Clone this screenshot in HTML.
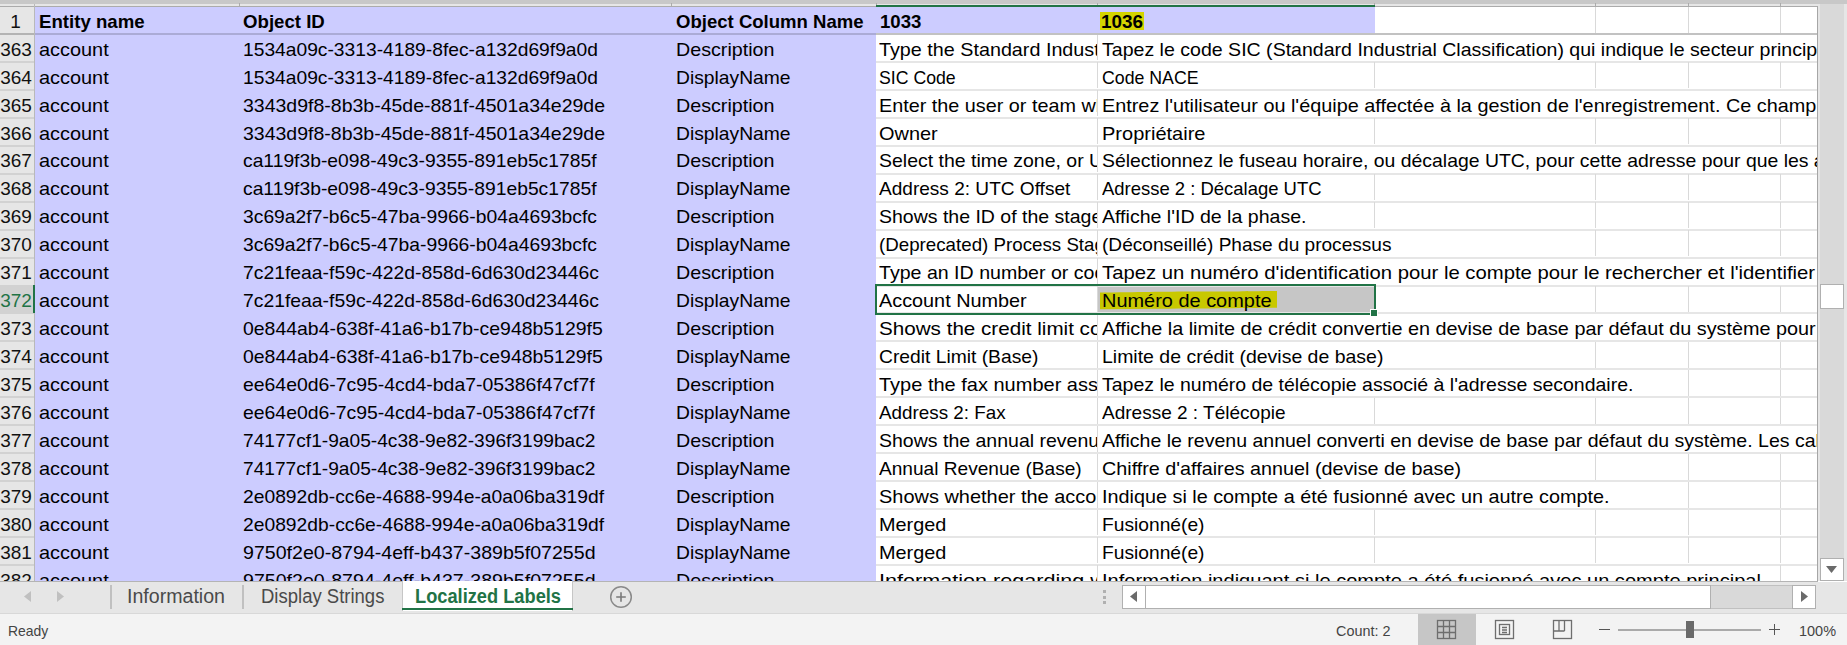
<!DOCTYPE html>
<html><head><meta charset="utf-8"><style>
html,body{margin:0;padding:0;}
body{width:1847px;height:645px;overflow:hidden;position:relative;background:#fff;font-family:"Liberation Sans",sans-serif;}
div{position:absolute;}
.t{white-space:nowrap;font-size:19px;line-height:19px;transform-origin:0 0;}
</style></head><body>
<div style="left:0px;top:0px;width:1847px;height:4px;background:#c8c8c8;"></div>
<div style="left:0px;top:4px;width:1818px;height:2px;background:#e6e6e6;"></div>
<div style="left:0px;top:6px;width:1818px;height:1px;background:#ababab;"></div>
<div style="left:239px;top:3px;width:1px;height:4px;background:#ababab;"></div>
<div style="left:671px;top:3px;width:1px;height:4px;background:#ababab;"></div>
<div style="left:876px;top:3px;width:1px;height:4px;background:#ababab;"></div>
<div style="left:1097px;top:3px;width:1px;height:4px;background:#ababab;"></div>
<div style="left:1374px;top:3px;width:1px;height:4px;background:#ababab;"></div>
<div style="left:1595px;top:3px;width:1px;height:4px;background:#ababab;"></div>
<div style="left:1688px;top:3px;width:1px;height:4px;background:#ababab;"></div>
<div style="left:1780px;top:3px;width:1px;height:4px;background:#ababab;"></div>
<div style="left:876px;top:5px;width:499px;height:2px;background:#217346;"></div>
<div style="left:0px;top:7px;width:34px;height:574px;background:#e6e6e6;"></div>
<div style="left:35px;top:7px;width:1340px;height:26px;background:#ccccff;"></div>
<div style="left:35px;top:33px;width:841px;height:548px;background:#ccccff;"></div>
<div style="left:0px;top:61px;width:34px;height:2px;background:#d2d2d2;"></div>
<div style="left:0px;top:89px;width:34px;height:2px;background:#d2d2d2;"></div>
<div style="left:0px;top:117px;width:34px;height:2px;background:#d2d2d2;"></div>
<div style="left:0px;top:145px;width:34px;height:2px;background:#d2d2d2;"></div>
<div style="left:0px;top:173px;width:34px;height:2px;background:#d2d2d2;"></div>
<div style="left:0px;top:201px;width:34px;height:2px;background:#d2d2d2;"></div>
<div style="left:0px;top:229px;width:34px;height:2px;background:#d2d2d2;"></div>
<div style="left:0px;top:257px;width:34px;height:2px;background:#d2d2d2;"></div>
<div style="left:0px;top:285px;width:34px;height:2px;background:#d2d2d2;"></div>
<div style="left:0px;top:312px;width:34px;height:2px;background:#d2d2d2;"></div>
<div style="left:0px;top:340px;width:34px;height:2px;background:#d2d2d2;"></div>
<div style="left:0px;top:368px;width:34px;height:2px;background:#d2d2d2;"></div>
<div style="left:0px;top:396px;width:34px;height:2px;background:#d2d2d2;"></div>
<div style="left:0px;top:424px;width:34px;height:2px;background:#d2d2d2;"></div>
<div style="left:0px;top:452px;width:34px;height:2px;background:#d2d2d2;"></div>
<div style="left:0px;top:480px;width:34px;height:2px;background:#d2d2d2;"></div>
<div style="left:0px;top:508px;width:34px;height:2px;background:#d2d2d2;"></div>
<div style="left:0px;top:536px;width:34px;height:2px;background:#d2d2d2;"></div>
<div style="left:0px;top:564px;width:34px;height:2px;background:#d2d2d2;"></div>
<div style="left:0px;top:285px;width:33px;height:28px;background:#d2d2d2;"></div>
<div style="left:33px;top:285px;width:2px;height:28px;background:#217346;"></div>
<div style="left:876px;top:61px;width:941px;height:2px;background:#e6e6e6;"></div>
<div style="left:876px;top:89px;width:941px;height:2px;background:#e6e6e6;"></div>
<div style="left:876px;top:117px;width:941px;height:2px;background:#e6e6e6;"></div>
<div style="left:876px;top:145px;width:941px;height:2px;background:#e6e6e6;"></div>
<div style="left:876px;top:173px;width:941px;height:2px;background:#e6e6e6;"></div>
<div style="left:876px;top:201px;width:941px;height:2px;background:#e6e6e6;"></div>
<div style="left:876px;top:229px;width:941px;height:2px;background:#e6e6e6;"></div>
<div style="left:876px;top:257px;width:941px;height:2px;background:#e6e6e6;"></div>
<div style="left:876px;top:285px;width:941px;height:2px;background:#e6e6e6;"></div>
<div style="left:876px;top:312px;width:941px;height:2px;background:#e6e6e6;"></div>
<div style="left:876px;top:340px;width:941px;height:2px;background:#e6e6e6;"></div>
<div style="left:876px;top:368px;width:941px;height:2px;background:#e6e6e6;"></div>
<div style="left:876px;top:396px;width:941px;height:2px;background:#e6e6e6;"></div>
<div style="left:876px;top:424px;width:941px;height:2px;background:#e6e6e6;"></div>
<div style="left:876px;top:452px;width:941px;height:2px;background:#e6e6e6;"></div>
<div style="left:876px;top:480px;width:941px;height:2px;background:#e6e6e6;"></div>
<div style="left:876px;top:508px;width:941px;height:2px;background:#e6e6e6;"></div>
<div style="left:876px;top:536px;width:941px;height:2px;background:#e6e6e6;"></div>
<div style="left:876px;top:564px;width:941px;height:2px;background:#e6e6e6;"></div>
<div style="left:1595px;top:7px;width:1px;height:26px;background:#d9d9d9;"></div>
<div style="left:1688px;top:7px;width:1px;height:26px;background:#d9d9d9;"></div>
<div style="left:1780px;top:7px;width:1px;height:26px;background:#d9d9d9;"></div>
<div style="left:1097px;top:35px;width:1px;height:25px;background:#d9d9d9;"></div>
<div style="left:1097px;top:62px;width:1px;height:26px;background:#d9d9d9;"></div>
<div style="left:1374px;top:62px;width:1px;height:26px;background:#d9d9d9;"></div>
<div style="left:1595px;top:62px;width:1px;height:26px;background:#d9d9d9;"></div>
<div style="left:1688px;top:62px;width:1px;height:26px;background:#d9d9d9;"></div>
<div style="left:1780px;top:62px;width:1px;height:26px;background:#d9d9d9;"></div>
<div style="left:1097px;top:90px;width:1px;height:26px;background:#d9d9d9;"></div>
<div style="left:1097px;top:118px;width:1px;height:26px;background:#d9d9d9;"></div>
<div style="left:1374px;top:118px;width:1px;height:26px;background:#d9d9d9;"></div>
<div style="left:1595px;top:118px;width:1px;height:26px;background:#d9d9d9;"></div>
<div style="left:1688px;top:118px;width:1px;height:26px;background:#d9d9d9;"></div>
<div style="left:1780px;top:118px;width:1px;height:26px;background:#d9d9d9;"></div>
<div style="left:1097px;top:146px;width:1px;height:26px;background:#d9d9d9;"></div>
<div style="left:1097px;top:174px;width:1px;height:26px;background:#d9d9d9;"></div>
<div style="left:1374px;top:174px;width:1px;height:26px;background:#d9d9d9;"></div>
<div style="left:1595px;top:174px;width:1px;height:26px;background:#d9d9d9;"></div>
<div style="left:1688px;top:174px;width:1px;height:26px;background:#d9d9d9;"></div>
<div style="left:1780px;top:174px;width:1px;height:26px;background:#d9d9d9;"></div>
<div style="left:1097px;top:202px;width:1px;height:26px;background:#d9d9d9;"></div>
<div style="left:1374px;top:202px;width:1px;height:26px;background:#d9d9d9;"></div>
<div style="left:1595px;top:202px;width:1px;height:26px;background:#d9d9d9;"></div>
<div style="left:1688px;top:202px;width:1px;height:26px;background:#d9d9d9;"></div>
<div style="left:1780px;top:202px;width:1px;height:26px;background:#d9d9d9;"></div>
<div style="left:1097px;top:230px;width:1px;height:26px;background:#d9d9d9;"></div>
<div style="left:1595px;top:230px;width:1px;height:26px;background:#d9d9d9;"></div>
<div style="left:1688px;top:230px;width:1px;height:26px;background:#d9d9d9;"></div>
<div style="left:1780px;top:230px;width:1px;height:26px;background:#d9d9d9;"></div>
<div style="left:1097px;top:258px;width:1px;height:26px;background:#d9d9d9;"></div>
<div style="left:1097px;top:286px;width:1px;height:26px;background:#d9d9d9;"></div>
<div style="left:1374px;top:286px;width:1px;height:26px;background:#d9d9d9;"></div>
<div style="left:1595px;top:286px;width:1px;height:26px;background:#d9d9d9;"></div>
<div style="left:1688px;top:286px;width:1px;height:26px;background:#d9d9d9;"></div>
<div style="left:1780px;top:286px;width:1px;height:26px;background:#d9d9d9;"></div>
<div style="left:1097px;top:314px;width:1px;height:26px;background:#d9d9d9;"></div>
<div style="left:1097px;top:342px;width:1px;height:26px;background:#d9d9d9;"></div>
<div style="left:1595px;top:342px;width:1px;height:26px;background:#d9d9d9;"></div>
<div style="left:1688px;top:342px;width:1px;height:26px;background:#d9d9d9;"></div>
<div style="left:1780px;top:342px;width:1px;height:26px;background:#d9d9d9;"></div>
<div style="left:1097px;top:370px;width:1px;height:26px;background:#d9d9d9;"></div>
<div style="left:1688px;top:370px;width:1px;height:26px;background:#d9d9d9;"></div>
<div style="left:1780px;top:370px;width:1px;height:26px;background:#d9d9d9;"></div>
<div style="left:1097px;top:398px;width:1px;height:26px;background:#d9d9d9;"></div>
<div style="left:1374px;top:398px;width:1px;height:26px;background:#d9d9d9;"></div>
<div style="left:1595px;top:398px;width:1px;height:26px;background:#d9d9d9;"></div>
<div style="left:1688px;top:398px;width:1px;height:26px;background:#d9d9d9;"></div>
<div style="left:1780px;top:398px;width:1px;height:26px;background:#d9d9d9;"></div>
<div style="left:1097px;top:426px;width:1px;height:26px;background:#d9d9d9;"></div>
<div style="left:1097px;top:454px;width:1px;height:26px;background:#d9d9d9;"></div>
<div style="left:1595px;top:454px;width:1px;height:26px;background:#d9d9d9;"></div>
<div style="left:1688px;top:454px;width:1px;height:26px;background:#d9d9d9;"></div>
<div style="left:1780px;top:454px;width:1px;height:26px;background:#d9d9d9;"></div>
<div style="left:1097px;top:482px;width:1px;height:26px;background:#d9d9d9;"></div>
<div style="left:1688px;top:482px;width:1px;height:26px;background:#d9d9d9;"></div>
<div style="left:1780px;top:482px;width:1px;height:26px;background:#d9d9d9;"></div>
<div style="left:1097px;top:510px;width:1px;height:25px;background:#d9d9d9;"></div>
<div style="left:1374px;top:510px;width:1px;height:25px;background:#d9d9d9;"></div>
<div style="left:1595px;top:510px;width:1px;height:25px;background:#d9d9d9;"></div>
<div style="left:1688px;top:510px;width:1px;height:25px;background:#d9d9d9;"></div>
<div style="left:1780px;top:510px;width:1px;height:25px;background:#d9d9d9;"></div>
<div style="left:1097px;top:537px;width:1px;height:26px;background:#d9d9d9;"></div>
<div style="left:1374px;top:537px;width:1px;height:26px;background:#d9d9d9;"></div>
<div style="left:1595px;top:537px;width:1px;height:26px;background:#d9d9d9;"></div>
<div style="left:1688px;top:537px;width:1px;height:26px;background:#d9d9d9;"></div>
<div style="left:1780px;top:537px;width:1px;height:26px;background:#d9d9d9;"></div>
<div style="left:1097px;top:565px;width:1px;height:16px;background:#d9d9d9;"></div>
<div style="left:1780px;top:565px;width:1px;height:16px;background:#d9d9d9;"></div>
<div style="left:1098px;top:287px;width:276px;height:25px;background:#c6c6c6;"></div>
<svg style="position:absolute;left:1099px;top:289px" width="180" height="22"><path d="M1 3.6 C40 3.4 60 2.6 100 2.6 S160 2 178 2 L178 18.8 C150 19 120 19.6 60 19.8 L1 20.3 Z" fill="#c8c800"/></svg>
<div style="left:1100px;top:12px;width:44px;height:18px;background:#d4d400;"></div>
<div style="left:0px;top:33px;width:35px;height:2px;background:rgba(0,0,0,0.22);"></div>
<div style="left:35px;top:33px;width:841px;height:2px;background:rgba(0,0,0,0.16);"></div>
<div style="left:876px;top:33px;width:941px;height:2px;background:rgba(0,0,0,0.24);"></div>
<div style="left:34px;top:4px;width:1px;height:577px;background:#b9b9b9;"></div>
<div style="left:33px;top:285px;width:2px;height:28px;background:#217346;"></div>
<div class="t" style="left:38.8px;top:12px;transform:scaleX(0.9815);font-weight:bold;color:#000;">Entity name</div>
<div class="t" style="left:243px;top:12px;transform:scaleX(0.9808);font-weight:bold;color:#000;">Object ID</div>
<div class="t" style="left:675.7px;top:12px;transform:scaleX(0.9764);font-weight:bold;color:#000;">Object Column Name</div>
<div class="t" style="left:880.4px;top:12px;transform:scaleX(0.9795);font-weight:bold;color:#000;">1033</div>
<div class="t" style="left:1101px;top:12px;transform:scaleX(0.9937);font-weight:bold;color:#000;">1036</div>
<div class="t" style="left:10.216796875px;top:12px;transform:scaleX(1.0000);color:#111;">1</div>
<div class="t" style="left:0.150390625px;top:40px;transform:scaleX(1.0000);color:#111;">363</div>
<div class="t" style="left:38.5px;top:40px;transform:scaleX(1.0474);color:#000;">account</div>
<div class="t" style="left:243px;top:40px;transform:scaleX(1.0119);color:#000;">1534a09c-3313-4189-8fec-a132d69f9a0d</div>
<div class="t" style="left:675.5px;top:40px;transform:scaleX(1.0365);color:#000;">Description</div>
<div style="left:876px;top:36px;width:221px;height:26px;overflow:hidden">
<div class="t" style="left:3.3px;top:4px;transform:scaleX(1.0395);color:#000;">Type the Standard Industrial Classification (SIC) code that indicates the account&#x27;s primary industry of business.</div>
</div>
<div style="left:1098px;top:36px;width:719px;height:26px;overflow:hidden">
<div class="t" style="left:3.5px;top:4px;transform:scaleX(1.0291);color:#000;">Tapez le code SIC (Standard Industrial Classification) qui indique le secteur principal d&#x27;activité du compte.</div>
</div>
<div class="t" style="left:0.150390625px;top:68px;transform:scaleX(1.0000);color:#111;">364</div>
<div class="t" style="left:38.5px;top:68px;transform:scaleX(1.0474);color:#000;">account</div>
<div class="t" style="left:243px;top:68px;transform:scaleX(1.0119);color:#000;">1534a09c-3313-4189-8fec-a132d69f9a0d</div>
<div class="t" style="left:675.5px;top:68px;transform:scaleX(1.0135);color:#000;">DisplayName</div>
<div style="left:876px;top:64px;width:221px;height:26px;overflow:hidden">
<div class="t" style="left:3.3px;top:4px;transform:scaleX(0.9311);color:#000;">SIC Code</div>
</div>
<div style="left:1098px;top:64px;width:719px;height:26px;overflow:hidden">
<div class="t" style="left:3.5px;top:4px;transform:scaleX(0.9325);color:#000;">Code NACE</div>
</div>
<div class="t" style="left:0.150390625px;top:96px;transform:scaleX(1.0000);color:#111;">365</div>
<div class="t" style="left:38.5px;top:96px;transform:scaleX(1.0474);color:#000;">account</div>
<div class="t" style="left:243px;top:96px;transform:scaleX(1.0259);color:#000;">3343d9f8-8b3b-45de-881f-4501a34e29de</div>
<div class="t" style="left:675.5px;top:96px;transform:scaleX(1.0365);color:#000;">Description</div>
<div style="left:876px;top:92px;width:221px;height:26px;overflow:hidden">
<div class="t" style="left:3.3px;top:4px;transform:scaleX(1.0416);color:#000;">Enter the user or team who is assigned to manage the record.</div>
</div>
<div style="left:1098px;top:92px;width:719px;height:26px;overflow:hidden">
<div class="t" style="left:3.5px;top:4px;transform:scaleX(1.0437);color:#000;">Entrez l&#x27;utilisateur ou l&#x27;équipe affectée à la gestion de l&#x27;enregistrement. Ce champ est mis à jour</div>
</div>
<div class="t" style="left:0.150390625px;top:124px;transform:scaleX(1.0000);color:#111;">366</div>
<div class="t" style="left:38.5px;top:124px;transform:scaleX(1.0474);color:#000;">account</div>
<div class="t" style="left:243px;top:124px;transform:scaleX(1.0259);color:#000;">3343d9f8-8b3b-45de-881f-4501a34e29de</div>
<div class="t" style="left:675.5px;top:124px;transform:scaleX(1.0135);color:#000;">DisplayName</div>
<div style="left:876px;top:120px;width:221px;height:26px;overflow:hidden">
<div class="t" style="left:3.3px;top:4px;transform:scaleX(1.0489);color:#000;">Owner</div>
</div>
<div style="left:1098px;top:120px;width:719px;height:26px;overflow:hidden">
<div class="t" style="left:3.5px;top:4px;transform:scaleX(1.0539);color:#000;">Propriétaire</div>
</div>
<div class="t" style="left:0.150390625px;top:151px;transform:scaleX(1.0000);color:#111;">367</div>
<div class="t" style="left:38.5px;top:151px;transform:scaleX(1.0474);color:#000;">account</div>
<div class="t" style="left:243px;top:151px;transform:scaleX(1.0151);color:#000;">ca119f3b-e098-49c3-9355-891eb5c1785f</div>
<div class="t" style="left:675.5px;top:151px;transform:scaleX(1.0365);color:#000;">Description</div>
<div style="left:876px;top:147px;width:221px;height:26px;overflow:hidden">
<div class="t" style="left:3.3px;top:4px;transform:scaleX(1.0255);color:#000;">Select the time zone, or UTC offset, for this address</div>
</div>
<div style="left:1098px;top:147px;width:719px;height:26px;overflow:hidden">
<div class="t" style="left:3.5px;top:4px;transform:scaleX(1.0212);color:#000;">Sélectionnez le fuseau horaire, ou décalage UTC, pour cette adresse pour que les autres</div>
</div>
<div class="t" style="left:0.150390625px;top:179px;transform:scaleX(1.0000);color:#111;">368</div>
<div class="t" style="left:38.5px;top:179px;transform:scaleX(1.0474);color:#000;">account</div>
<div class="t" style="left:243px;top:179px;transform:scaleX(1.0151);color:#000;">ca119f3b-e098-49c3-9355-891eb5c1785f</div>
<div class="t" style="left:675.5px;top:179px;transform:scaleX(1.0135);color:#000;">DisplayName</div>
<div style="left:876px;top:175px;width:221px;height:26px;overflow:hidden">
<div class="t" style="left:3.3px;top:4px;transform:scaleX(1.0028);color:#000;">Address 2: UTC Offset</div>
</div>
<div style="left:1098px;top:175px;width:719px;height:26px;overflow:hidden">
<div class="t" style="left:3.5px;top:4px;transform:scaleX(0.9713);color:#000;">Adresse 2 : Décalage UTC</div>
</div>
<div class="t" style="left:0.150390625px;top:207px;transform:scaleX(1.0000);color:#111;">369</div>
<div class="t" style="left:38.5px;top:207px;transform:scaleX(1.0474);color:#000;">account</div>
<div class="t" style="left:243px;top:207px;transform:scaleX(1.0155);color:#000;">3c69a2f7-b6c5-47ba-9966-b04a4693bcfc</div>
<div class="t" style="left:675.5px;top:207px;transform:scaleX(1.0365);color:#000;">Description</div>
<div style="left:876px;top:203px;width:221px;height:26px;overflow:hidden">
<div class="t" style="left:3.3px;top:4px;transform:scaleX(1.0261);color:#000;">Shows the ID of the stage.</div>
</div>
<div style="left:1098px;top:203px;width:719px;height:26px;overflow:hidden">
<div class="t" style="left:3.5px;top:4px;transform:scaleX(1.0293);color:#000;">Affiche l&#x27;ID de la phase.</div>
</div>
<div class="t" style="left:0.150390625px;top:235px;transform:scaleX(1.0000);color:#111;">370</div>
<div class="t" style="left:38.5px;top:235px;transform:scaleX(1.0474);color:#000;">account</div>
<div class="t" style="left:243px;top:235px;transform:scaleX(1.0155);color:#000;">3c69a2f7-b6c5-47ba-9966-b04a4693bcfc</div>
<div class="t" style="left:675.5px;top:235px;transform:scaleX(1.0135);color:#000;">DisplayName</div>
<div style="left:876px;top:231px;width:221px;height:26px;overflow:hidden">
<div class="t" style="left:3.3px;top:4px;transform:scaleX(0.9858);color:#000;">(Deprecated) Process Stage</div>
</div>
<div style="left:1098px;top:231px;width:719px;height:26px;overflow:hidden">
<div class="t" style="left:3.5px;top:4px;transform:scaleX(1.0041);color:#000;">(Déconseillé) Phase du processus</div>
</div>
<div class="t" style="left:0.150390625px;top:263px;transform:scaleX(1.0000);color:#111;">371</div>
<div class="t" style="left:38.5px;top:263px;transform:scaleX(1.0474);color:#000;">account</div>
<div class="t" style="left:243px;top:263px;transform:scaleX(1.0181);color:#000;">7c21feaa-f59c-422d-858d-6d630d23446c</div>
<div class="t" style="left:675.5px;top:263px;transform:scaleX(1.0365);color:#000;">Description</div>
<div style="left:876px;top:259px;width:221px;height:26px;overflow:hidden">
<div class="t" style="left:3.3px;top:4px;transform:scaleX(1.0306);color:#000;">Type an ID number or code for the account</div>
</div>
<div style="left:1098px;top:259px;width:719px;height:26px;overflow:hidden">
<div class="t" style="left:3.5px;top:4px;transform:scaleX(1.0669);color:#000;">Tapez un numéro d&#x27;identification pour le compte pour le rechercher et l&#x27;identifier rapidement</div>
</div>
<div class="t" style="left:0.150390625px;top:291px;transform:scaleX(1.0000);color:#217346;">372</div>
<div class="t" style="left:38.5px;top:291px;transform:scaleX(1.0474);color:#000;">account</div>
<div class="t" style="left:243px;top:291px;transform:scaleX(1.0181);color:#000;">7c21feaa-f59c-422d-858d-6d630d23446c</div>
<div class="t" style="left:675.5px;top:291px;transform:scaleX(1.0135);color:#000;">DisplayName</div>
<div style="left:876px;top:287px;width:221px;height:26px;overflow:hidden">
<div class="t" style="left:3.3px;top:4px;transform:scaleX(1.0438);color:#000;">Account Number</div>
</div>
<div style="left:1098px;top:287px;width:719px;height:26px;overflow:hidden">
<div class="t" style="left:3.5px;top:4px;transform:scaleX(1.0491);color:#000;">Numéro de compte</div>
</div>
<div class="t" style="left:0.150390625px;top:319px;transform:scaleX(1.0000);color:#111;">373</div>
<div class="t" style="left:38.5px;top:319px;transform:scaleX(1.0474);color:#000;">account</div>
<div class="t" style="left:243px;top:319px;transform:scaleX(1.0225);color:#000;">0e844ab4-638f-41a6-b17b-ce948b5129f5</div>
<div class="t" style="left:675.5px;top:319px;transform:scaleX(1.0365);color:#000;">Description</div>
<div style="left:876px;top:315px;width:221px;height:26px;overflow:hidden">
<div class="t" style="left:3.3px;top:4px;transform:scaleX(1.0857);color:#000;">Shows the credit limit converted to the system</div>
</div>
<div style="left:1098px;top:315px;width:719px;height:26px;overflow:hidden">
<div class="t" style="left:3.5px;top:4px;transform:scaleX(1.0434);color:#000;">Affiche la limite de crédit convertie en devise de base par défaut du système pour les rapports.</div>
</div>
<div class="t" style="left:0.150390625px;top:347px;transform:scaleX(1.0000);color:#111;">374</div>
<div class="t" style="left:38.5px;top:347px;transform:scaleX(1.0474);color:#000;">account</div>
<div class="t" style="left:243px;top:347px;transform:scaleX(1.0225);color:#000;">0e844ab4-638f-41a6-b17b-ce948b5129f5</div>
<div class="t" style="left:675.5px;top:347px;transform:scaleX(1.0135);color:#000;">DisplayName</div>
<div style="left:876px;top:343px;width:221px;height:26px;overflow:hidden">
<div class="t" style="left:3.3px;top:4px;transform:scaleX(1.0132);color:#000;">Credit Limit (Base)</div>
</div>
<div style="left:1098px;top:343px;width:719px;height:26px;overflow:hidden">
<div class="t" style="left:3.5px;top:4px;transform:scaleX(1.0248);color:#000;">Limite de crédit (devise de base)</div>
</div>
<div class="t" style="left:0.150390625px;top:375px;transform:scaleX(1.0000);color:#111;">375</div>
<div class="t" style="left:38.5px;top:375px;transform:scaleX(1.0474);color:#000;">account</div>
<div class="t" style="left:243px;top:375px;transform:scaleX(1.0210);color:#000;">ee64e0d6-7c95-4cd4-bda7-05386f47cf7f</div>
<div class="t" style="left:675.5px;top:375px;transform:scaleX(1.0365);color:#000;">Description</div>
<div style="left:876px;top:371px;width:221px;height:26px;overflow:hidden">
<div class="t" style="left:3.3px;top:4px;transform:scaleX(1.0525);color:#000;">Type the fax number associated with the secondary address.</div>
</div>
<div style="left:1098px;top:371px;width:719px;height:26px;overflow:hidden">
<div class="t" style="left:3.5px;top:4px;transform:scaleX(1.0259);color:#000;">Tapez le numéro de télécopie associé à l&#x27;adresse secondaire.</div>
</div>
<div class="t" style="left:0.150390625px;top:403px;transform:scaleX(1.0000);color:#111;">376</div>
<div class="t" style="left:38.5px;top:403px;transform:scaleX(1.0474);color:#000;">account</div>
<div class="t" style="left:243px;top:403px;transform:scaleX(1.0210);color:#000;">ee64e0d6-7c95-4cd4-bda7-05386f47cf7f</div>
<div class="t" style="left:675.5px;top:403px;transform:scaleX(1.0135);color:#000;">DisplayName</div>
<div style="left:876px;top:399px;width:221px;height:26px;overflow:hidden">
<div class="t" style="left:3.3px;top:4px;transform:scaleX(0.9916);color:#000;">Address 2: Fax</div>
</div>
<div style="left:1098px;top:399px;width:719px;height:26px;overflow:hidden">
<div class="t" style="left:3.5px;top:4px;transform:scaleX(1.0004);color:#000;">Adresse 2 : Télécopie</div>
</div>
<div class="t" style="left:0.150390625px;top:431px;transform:scaleX(1.0000);color:#111;">377</div>
<div class="t" style="left:38.5px;top:431px;transform:scaleX(1.0474);color:#000;">account</div>
<div class="t" style="left:243px;top:431px;transform:scaleX(1.0081);color:#000;">74177cf1-9a05-4c38-9e82-396f3199bac2</div>
<div class="t" style="left:675.5px;top:431px;transform:scaleX(1.0365);color:#000;">Description</div>
<div style="left:876px;top:427px;width:221px;height:26px;overflow:hidden">
<div class="t" style="left:3.3px;top:4px;transform:scaleX(1.0268);color:#000;">Shows the annual revenue converted to the system</div>
</div>
<div style="left:1098px;top:427px;width:719px;height:26px;overflow:hidden">
<div class="t" style="left:3.5px;top:4px;transform:scaleX(1.0272);color:#000;">Affiche le revenu annuel converti en devise de base par défaut du système. Les calculs utilisent</div>
</div>
<div class="t" style="left:0.150390625px;top:459px;transform:scaleX(1.0000);color:#111;">378</div>
<div class="t" style="left:38.5px;top:459px;transform:scaleX(1.0474);color:#000;">account</div>
<div class="t" style="left:243px;top:459px;transform:scaleX(1.0081);color:#000;">74177cf1-9a05-4c38-9e82-396f3199bac2</div>
<div class="t" style="left:675.5px;top:459px;transform:scaleX(1.0135);color:#000;">DisplayName</div>
<div style="left:876px;top:455px;width:221px;height:26px;overflow:hidden">
<div class="t" style="left:3.3px;top:4px;transform:scaleX(1.0048);color:#000;">Annual Revenue (Base)</div>
</div>
<div style="left:1098px;top:455px;width:719px;height:26px;overflow:hidden">
<div class="t" style="left:3.5px;top:4px;transform:scaleX(1.0402);color:#000;">Chiffre d&#x27;affaires annuel (devise de base)</div>
</div>
<div class="t" style="left:0.150390625px;top:487px;transform:scaleX(1.0000);color:#111;">379</div>
<div class="t" style="left:38.5px;top:487px;transform:scaleX(1.0474);color:#000;">account</div>
<div class="t" style="left:243px;top:487px;transform:scaleX(1.0140);color:#000;">2e0892db-cc6e-4688-994e-a0a06ba319df</div>
<div class="t" style="left:675.5px;top:487px;transform:scaleX(1.0365);color:#000;">Description</div>
<div style="left:876px;top:483px;width:221px;height:26px;overflow:hidden">
<div class="t" style="left:3.3px;top:4px;transform:scaleX(1.0502);color:#000;">Shows whether the account has been merged</div>
</div>
<div style="left:1098px;top:483px;width:719px;height:26px;overflow:hidden">
<div class="t" style="left:3.5px;top:4px;transform:scaleX(1.0423);color:#000;">Indique si le compte a été fusionné avec un autre compte.</div>
</div>
<div class="t" style="left:0.150390625px;top:515px;transform:scaleX(1.0000);color:#111;">380</div>
<div class="t" style="left:38.5px;top:515px;transform:scaleX(1.0474);color:#000;">account</div>
<div class="t" style="left:243px;top:515px;transform:scaleX(1.0140);color:#000;">2e0892db-cc6e-4688-994e-a0a06ba319df</div>
<div class="t" style="left:675.5px;top:515px;transform:scaleX(1.0135);color:#000;">DisplayName</div>
<div style="left:876px;top:511px;width:221px;height:26px;overflow:hidden">
<div class="t" style="left:3.3px;top:4px;transform:scaleX(1.0447);color:#000;">Merged</div>
</div>
<div style="left:1098px;top:511px;width:719px;height:26px;overflow:hidden">
<div class="t" style="left:3.5px;top:4px;transform:scaleX(1.0110);color:#000;">Fusionné(e)</div>
</div>
<div class="t" style="left:0.150390625px;top:543px;transform:scaleX(1.0000);color:#111;">381</div>
<div class="t" style="left:38.5px;top:543px;transform:scaleX(1.0474);color:#000;">account</div>
<div class="t" style="left:243px;top:543px;transform:scaleX(1.0309);color:#000;">9750f2e0-8794-4eff-b437-389b5f07255d</div>
<div class="t" style="left:675.5px;top:543px;transform:scaleX(1.0135);color:#000;">DisplayName</div>
<div style="left:876px;top:539px;width:221px;height:26px;overflow:hidden">
<div class="t" style="left:3.3px;top:4px;transform:scaleX(1.0447);color:#000;">Merged</div>
</div>
<div style="left:1098px;top:539px;width:719px;height:26px;overflow:hidden">
<div class="t" style="left:3.5px;top:4px;transform:scaleX(1.0110);color:#000;">Fusionné(e)</div>
</div>
<div class="t" style="left:0.150390625px;top:571px;transform:scaleX(1.0000);color:#111;">382</div>
<div class="t" style="left:38.5px;top:571px;transform:scaleX(1.0474);color:#000;">account</div>
<div class="t" style="left:243px;top:571px;transform:scaleX(1.0309);color:#000;">9750f2e0-8794-4eff-b437-389b5f07255d</div>
<div class="t" style="left:675.5px;top:571px;transform:scaleX(1.0365);color:#000;">Description</div>
<div style="left:876px;top:567px;width:221px;height:26px;overflow:hidden">
<div class="t" style="left:3.3px;top:4px;transform:scaleX(1.1368);color:#000;">Information regarding whether the account was merged</div>
</div>
<div style="left:1098px;top:567px;width:719px;height:26px;overflow:hidden">
<div class="t" style="left:3.5px;top:4px;transform:scaleX(1.0556);color:#000;">Information indiquant si le compte a été fusionné avec un compte principal.</div>
</div>
<div style="left:875px;top:284px;width:501px;height:2px;background:#217346;"></div>
<div style="left:875px;top:313px;width:501px;height:2px;background:#217346;"></div>
<div style="left:875px;top:284px;width:2px;height:31px;background:#217346;"></div>
<div style="left:1374px;top:284px;width:2px;height:26px;background:#217346;"></div>
<div style="left:1371px;top:310px;width:6px;height:6px;background:#217346;border:1px solid #fff;box-sizing:content-box;left:1370px;top:309px;"></div>
<div style="left:1817px;top:6px;width:1px;height:575px;background:#a6a6a6;"></div>
<div style="left:1818px;top:4px;width:29px;height:577px;background:#e6e6e6;"></div>
<div style="left:1820px;top:4px;width:24px;height:577px;background:#d9d9d9;"></div>
<div style="left:1820px;top:284px;width:24px;height:25px;background:#fff;border:1px solid #b0b0b0;box-sizing:border-box;"></div>
<div style="left:1820px;top:558px;width:24px;height:23px;background:#fff;border:1px solid #b0b0b0;box-sizing:border-box;"></div>
<svg style="position:absolute;left:1826px;top:566px" width="12" height="8"><polygon points="0,0 11,0 5.5,7" fill="#6a6a6a"/></svg>
<div style="left:0px;top:581px;width:1818px;height:1px;background:#b4b4b4;"></div>
<div style="left:0px;top:582px;width:1847px;height:32px;background:#e6e6e6;"></div>
<div style="left:0px;top:613px;width:1847px;height:1px;background:#d8d8d8;"></div>
<div style="left:0px;top:614px;width:1847px;height:31px;background:#f3f3f3;"></div>
<svg style="position:absolute;left:24px;top:591px" width="8" height="12"><polygon points="7,0 7,11 0,5.5" fill="#c0c0c0"/></svg>
<svg style="position:absolute;left:57px;top:591px" width="8" height="12"><polygon points="0,0 0,11 7,5.5" fill="#c0c0c0"/></svg>
<div style="left:110px;top:585px;width:2px;height:24px;background:#c0c0c0;"></div>
<div style="left:242px;top:585px;width:2px;height:24px;background:#c0c0c0;"></div>
<div class="t" style="left:127.3px;top:586px;transform:scaleX(0.9795);font-size:20px;line-height:20px;color:#4a4a4a;">Information</div>
<div class="t" style="left:260.9px;top:586px;transform:scaleX(0.9252);font-size:20px;line-height:20px;color:#4a4a4a;">Display Strings</div>
<div style="left:402px;top:581px;width:171px;height:30px;background:#fff;border-left:1px solid #c6c6c6;border-right:1px solid #c6c6c6;box-sizing:border-box;"></div>
<div style="left:402px;top:608px;width:171px;height:2px;background:#217346;"></div>
<div class="t" style="left:415.3px;top:586px;transform:scaleX(0.9122);font-weight:bold;font-size:20px;line-height:20px;color:#217346;">Localized Labels</div>
<svg style="position:absolute;left:609px;top:585px" width="24" height="24"><circle cx="12" cy="12" r="10.3" fill="none" stroke="#8a8a8a" stroke-width="1.5"/><path d="M12 7.2V16.8M7.2 12H16.8" stroke="#7a7a7a" stroke-width="1.6"/></svg>
<div style="left:1103px;top:590px;width:3px;height:3px;background:#b0b0b0;"></div>
<div style="left:1103px;top:596px;width:3px;height:3px;background:#b0b0b0;"></div>
<div style="left:1103px;top:601px;width:3px;height:3px;background:#b0b0b0;"></div>
<div style="left:1122px;top:585px;width:694px;height:24px;background:#d9d9d9;border:1px solid #c0c0c0;box-sizing:border-box;"></div>
<div style="left:1122px;top:585px;width:25px;height:24px;background:#fff;border:1px solid #b0b0b0;border-right:2px solid #a8a8a8;box-sizing:border-box;"></div>
<div style="left:1145px;top:585px;width:566px;height:24px;background:#fff;border:1px solid #b0b0b0;box-sizing:border-box;"></div>
<div style="left:1792px;top:585px;width:24px;height:24px;background:#fff;border:1px solid #b0b0b0;box-sizing:border-box;"></div>
<svg style="position:absolute;left:1130px;top:591px" width="8" height="12"><polygon points="7,0 7,11 0,5.5" fill="#6a6a6a"/></svg>
<svg style="position:absolute;left:1801px;top:591px" width="8" height="12"><polygon points="0,0 0,11 7,5.5" fill="#6a6a6a"/></svg>
<div class="t" style="left:8.4px;top:624px;transform:scaleX(0.9420);font-size:14.8px;line-height:14.8px;color:#444;">Ready</div>
<div class="t" style="left:1336.4px;top:624px;transform:scaleX(0.9742);font-size:14.8px;line-height:14.8px;color:#444;">Count: 2</div>
<div style="left:1418px;top:614px;width:58px;height:31px;background:#c6c6c6;"></div>
<svg style="position:absolute;left:1436px;top:619px" width="22" height="22"><g fill="none" stroke="#6e6e6e" stroke-width="1.3">
<rect x="1.5" y="1.5" width="18" height="18"/><path d="M7.5 1.5V19.5M13.5 1.5V19.5M1.5 7.5H19.5M1.5 13.5H19.5"/></g></svg>
<svg style="position:absolute;left:1494px;top:619px" width="22" height="22"><g fill="none" stroke="#6e6e6e" stroke-width="1.3">
<rect x="1.5" y="1.5" width="18" height="18"/><rect x="5.5" y="5.5" width="10" height="10"/><path d="M8 8.5H13M8 11H13M8 13.5H13"/></g></svg>
<svg style="position:absolute;left:1552px;top:619px" width="22" height="22"><g fill="none" stroke="#6e6e6e" stroke-width="1.3">
<rect x="1.5" y="1.5" width="18" height="18"/><path d="M7 1.5V12M12.5 1.5V12M1.5 12H12.5"/></g></svg>
<div style="left:1599px;top:629px;width:11px;height:1px;background:#555;"></div>
<div style="left:1618px;top:629px;width:143px;height:2px;background:#aaaaaa;"></div>
<div style="left:1686px;top:621px;width:8px;height:17px;background:#6a6a6a;"></div>
<div style="left:1769px;top:629px;width:11px;height:1px;background:#555;"></div>
<div style="left:1774px;top:624px;width:1px;height:11px;background:#555;"></div>
<div class="t" style="left:1798.7px;top:624px;transform:scaleX(0.9776);font-size:14.8px;line-height:14.8px;color:#444;">100%</div>
</body></html>
